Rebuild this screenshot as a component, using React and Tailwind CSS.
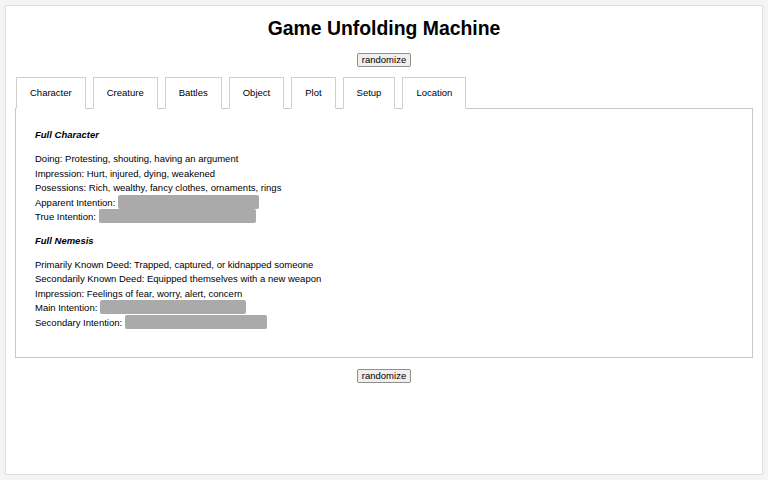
import React, { useState } from "react";

const tabs = ["Character", "Creature", "Battles", "Object", "Plot", "Setup", "Location"];

function Bar({ w }) {
  return (
    <span
      className="inline-block h-[14px] align-middle rounded-[2px] bg-[#aaaaaa] ml-[3px] -mt-[2px]"
      style={{ width: w }}
    />
  );
}

function RandomButton() {
  return (
    <button className="h-[14px] px-[4px] text-[9.5px] leading-[12px] text-black bg-[#efefef] border border-[#8f8f8f] rounded-[2px]">
      randomize
    </button>
  );
}

export default function App() {
  const [active, setActive] = useState("Character");

  return (
    <div className="min-h-[480px] bg-[#f4f4f4] pt-[5px] px-[5px] font-['Liberation_Sans',Arial,sans-serif] text-black">
      <div className="w-[758px] h-[470px] bg-white border border-[#dedede] px-[9px]">
        <h1 className="text-center text-[19.4px] leading-[24px] font-bold pt-[10px]">
          Game Unfolding Machine
        </h1>
        <div className="flex justify-center mt-[13px]">
          <RandomButton />
        </div>

        <div className="flex gap-[7px] mt-[10px] pl-[1px] relative z-10">
          {tabs.map((t) => (
            <button
              key={t}
              onClick={() => setActive(t)}
              className={
                "h-[32px] px-[13px] text-[9.5px] border border-[#d0d0d0] bg-white " +
                (active === t ? "border-b-white" : "border-b-transparent h-[31px]")
              }
            >
              {t}
            </button>
          ))}
        </div>

        <div className="-mt-px border border-[#c8c8c8] h-[250px] pt-[19px] pl-[19px] text-[9.5px] leading-[14.5px]">
          <div className="font-bold italic mb-[9.5px]">Full Character</div>
          <div>Doing: Protesting, shouting, having an argument</div>
          <div>Impression: Hurt, injured, dying, weakened</div>
          <div>Posessions: Rich, wealthy, fancy clothes, ornaments, rings</div>
          <div>
            Apparent Intention:<Bar w={141} />
          </div>
          <div>
            True Intention:<Bar w={157} />
          </div>

          <div className="font-bold italic mt-[9px] mb-[9.5px]">Full Nemesis</div>
          <div>Primarily Known Deed: Trapped, captured, or kidnapped someone</div>
          <div>Secondarily Known Deed: Equipped themselves with a new weapon</div>
          <div>Impression: Feelings of fear, worry, alert, concern</div>
          <div>
            Main Intention:<Bar w={146} />
          </div>
          <div>
            Secondary Intention:<Bar w={142} />
          </div>
        </div>

        <div className="flex justify-center mt-[11px]">
          <RandomButton />
        </div>
      </div>
    </div>
  );
}
